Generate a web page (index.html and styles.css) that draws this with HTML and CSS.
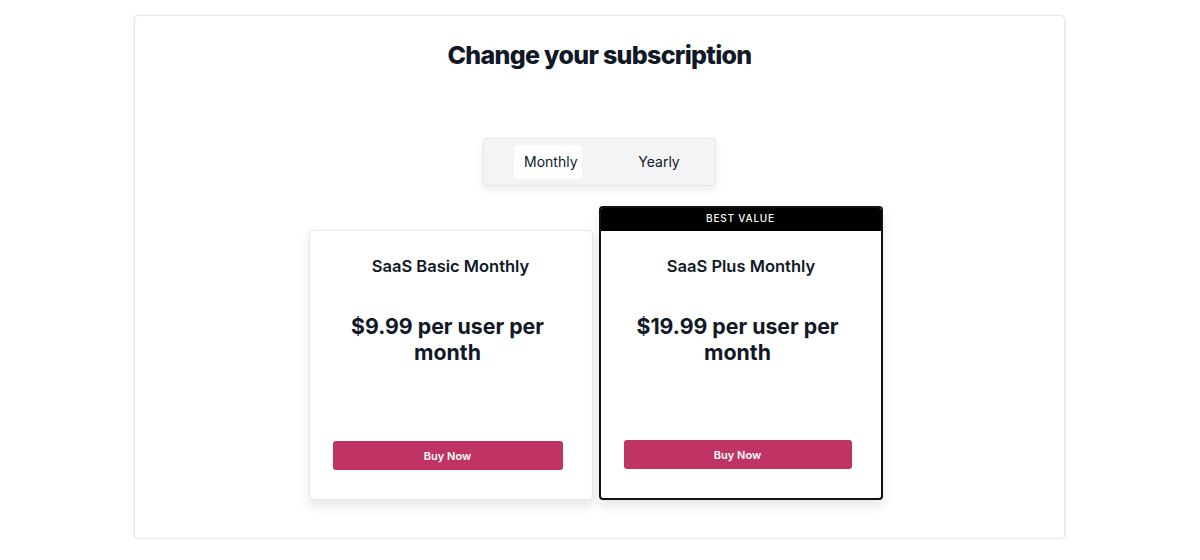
FILE: index.html
```html
<!DOCTYPE html>
<html>
<head>
<meta charset="utf-8">
<link rel="stylesheet" href="styles.css">
</head>
<body>
<div class="page">
  <div class="panel">
    <h1 class="title">Change your subscription</h1>
    <div class="toggle-wrap">
      <div class="toggle">
        <button class="tab tab-active">Monthly</button>
        <button class="tab">Yearly</button>
      </div>
    </div>
    <div class="plans">
      <div class="plan plan-basic">
        <div class="plan-body">
          <h2 class="plan-name">SaaS Basic Monthly</h2>
          <p class="plan-price">$9.99 per user per month</p>
          <button class="buy">Buy Now</button>
        </div>
      </div>
      <div class="plan plan-plus">
        <div class="plan-badge">BEST VALUE</div>
        <div class="plan-body">
          <h2 class="plan-name">SaaS Plus Monthly</h2>
          <p class="plan-price">$19.99 per user per month</p>
          <button class="buy">Buy Now</button>
        </div>
      </div>
    </div>
  </div>
</div>
</body>
</html>
```
FILE: styles.css
```css
* { box-sizing: border-box; }
html, body { margin: 0; padding: 0; background: #ffffff; }
body { font-family: Inter, "Noto Sans", sans-serif; color: #111827; }
.page { padding: 15px 0 0 134px; }
.panel {
  width: 931px;
  height: 524px;
  background: #fff;
  border: 1px solid #e5e7eb;
  border-radius: 4px;
  box-shadow: 0 1px 4px rgba(0,0,0,0.08);
  padding-top: 22px;
}
.title {
  margin: 0;
  text-align: center;
  font-size: 25px;
  font-weight: 800;
  letter-spacing: -0.7px;
  line-height: 34px;
  color: #111827;
}
.toggle-wrap { display: flex; justify-content: center; margin-top: 66px; }
.toggle {
  display: flex;
  width: 233px;
  height: 48px;
  padding: 6px 0 6px 30px;
  background: #f3f4f6;
  border: 1px solid #e5e7eb;
  border-radius: 3px;
  box-shadow: 0 4px 8px rgba(0,0,0,0.08);
  gap: 23px;
}
.tab {
  border: none;
  background: transparent;
  font-family: Inter, "Noto Sans", sans-serif;
  font-size: 14px;
  color: #111827;
  height: 34px;
  padding: 0 10px 2px;
  border-radius: 3px;
  cursor: pointer;
}
.tab-active { background: #fff; width: 68px; }
.tab:not(.tab-active) { width: 108px; }
.plans {
  display: flex;
  justify-content: center;
  align-items: flex-end;
  gap: 6px;
  margin-top: 20px;
  padding-right: 8px;
}
.plan {
  width: 284px;
  background: #fff;
  border-radius: 4px;
  box-shadow: 0 6px 12px rgba(0,0,0,0.1);
}
.plan-basic { border: 1px solid #e5e7eb; height: 270px; }
.plan-plus { border: 2px solid #111; height: 294px; overflow: hidden; }
.plan-badge {
  background: #000;
  color: #fff;
  height: 23px;
  font-size: 10px;
  font-weight: 500;
  letter-spacing: 0.8px;
  text-align: center;
  line-height: 21px;
}
.plan-body {
  display: flex;
  flex-direction: column;
  align-items: center;
  padding: 23px 6px 0 0;
}
.plan-name {
  margin: 0;
  font-size: 16.5px;
  font-weight: 600;
  line-height: 24px;
  color: #111827;
}
.plan-basic .plan-name { margin-left: 6px; }
.plan-plus .plan-name { margin-left: 7px; }
.plan-price {
  margin: 35px 0 0;
  font-size: 21.3px;
  font-weight: 700;
  line-height: 26px;
  text-align: center;
  width: 215px;
  color: #111827;
}
.buy {
  margin-top: 76px;
  width: 230px;
  height: 29px;
  border: none;
  border-radius: 3px;
  background: #c03465;
  color: #fff;
  font-family: Inter, "Noto Sans", sans-serif;
  font-size: 11px;
  font-weight: 600;
  cursor: pointer;
}
.plan-plus .buy { width: 228px; margin-top: 75px; }
```
